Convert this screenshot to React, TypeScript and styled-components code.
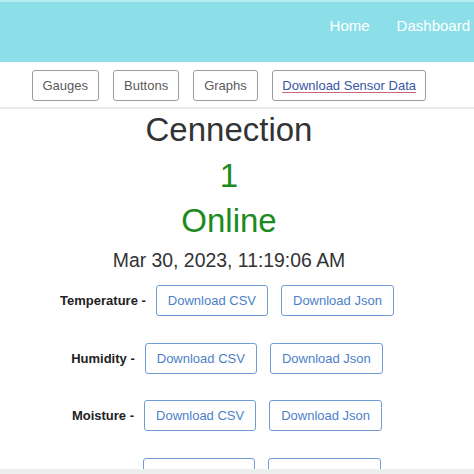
import React from "react";
import styled, { createGlobalStyle } from "styled-components";

const Global = createGlobalStyle`
  html, body { margin: 0; padding: 0; background: #fff; }
  body { font-family: "Liberation Sans", Arial, sans-serif; }
  * { box-sizing: border-box; }
`;

const Header = styled.header`
  height: 62px;
  border-top: 2px solid #b6ebf0;
  background: #8cdfe8;
  display: flex;
  justify-content: flex-end;
  align-items: flex-start;
  gap: 27px;
  padding: 15px 4px 0 0;
`;

const NavLink = styled.a`
  color: #ffffff;
  font-size: 15px;
  line-height: 18px;
  text-decoration: none;
`;

const Main = styled.main`
  width: 458px;
  display: flex;
  flex-direction: column;
  align-items: center;
`;

const Toolbar = styled.nav`
  width: 474px;
  align-self: flex-start;
  border-bottom: 2px solid #e9e9e9;
  padding: 8px 16px 6px 0;
  display: flex;
  justify-content: center;
  gap: 14px;
`;

const ToolButton = styled.button<{ $link?: boolean }>`
  height: 31px;
  padding: 0 ${(p) => (p.$link ? "9.5px" : "10px")};
  background: #fff;
  border: 1px solid #9c9c9c;
  border-radius: 3px;
  font-family: "Liberation Sans", Arial, sans-serif;
  font-size: 13px;
  color: ${(p) => (p.$link ? "#3b56a6" : "#5a5a5a")};
  text-decoration: ${(p) => (p.$link ? "underline" : "none")};
  text-decoration-color: #c8657a;
  text-underline-offset: 2px;
`;

const Title = styled.div<{ $green?: boolean; $mt: number }>`
  font-size: 33px;
  line-height: 40px;
  margin-top: ${(p) => p.$mt}px;
  color: ${(p) => (p.$green ? "#1c8a1c" : "#333333")};
`;

const DateLine = styled.div`
  font-size: 19.4px;
  line-height: 24px;
  margin-top: 7px;
  color: #333;
`;

const Rows = styled.div`
  margin-top: 13px;
  display: flex;
  flex-direction: column;
  align-items: center;
  gap: 26.5px;
  padding-right: 4px;
`;

const Row = styled.div`
  display: flex;
  align-items: center;
  height: 31px;
`;

const Label = styled.span`
  font-weight: bold;
  font-size: 13px;
  color: #222;
  margin-right: 10px;
`;

const DownloadButton = styled.button`
  height: 31px;
  padding: 0 11px;
  margin-right: 13px;
  background: #fff;
  border: 1px solid #6f9bd6;
  border-radius: 3px;
  font-family: "Liberation Sans", Arial, sans-serif;
  font-size: 13px;
  color: #4d7fc8;
  &:last-child { margin-right: 0; }
`;

const BottomBar = styled.div`
  position: fixed;
  left: 0;
  right: 0;
  bottom: 0;
  height: 5px;
  background: #ededed;
`;

const sensors = ["Temperature", "Humidity", "Moisture", "Sensors"];

export default function App() {
  return (
    <>
      <Global />
      <Header>
        <NavLink>Home</NavLink>
        <NavLink>Dashboard</NavLink>
      </Header>
      <Main>
        <Toolbar>
          <ToolButton>Gauges</ToolButton>
          <ToolButton>Buttons</ToolButton>
          <ToolButton>Graphs</ToolButton>
          <ToolButton $link>Download Sensor Data</ToolButton>
        </Toolbar>
        <Title $mt={1}>Cennection</Title>
        <Title $green $mt={6}>1</Title>
        <Title $green $mt={5}>Online</Title>
        <DateLine>Mar 30, 2023, 11:19:06 AM</DateLine>
        <Rows>
          {sensors.map((s) => (
            <Row key={s}>
              <Label>{s} -</Label>
              <DownloadButton>Download CSV</DownloadButton>
              <DownloadButton>Download Json</DownloadButton>
            </Row>
          ))}
        </Rows>
      </Main>
      <BottomBar />
    </>
  );
}
